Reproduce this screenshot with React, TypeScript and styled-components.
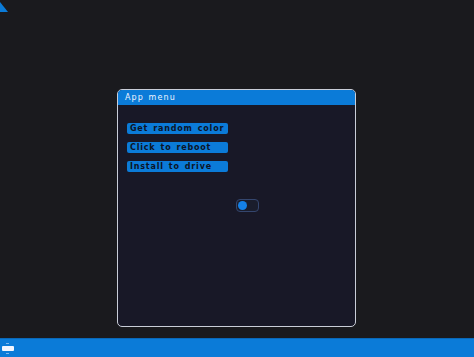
import React, { useState } from 'react';
import styled, { createGlobalStyle } from 'styled-components';

const GlobalStyle = createGlobalStyle`
  html, body {
    margin: 0;
    padding: 0;
    background: #1a1a1e;
    overflow: hidden;
  }
  #root {
    height: 357px;
  }
`;

const Screen = styled.div`
  display: flex;
  flex-direction: column;
  width: 474px;
  height: 357px;
  background: #1a1a1e;
  font-family: 'DejaVu Sans', sans-serif;
`;

const Desktop = styled.div`
  position: relative;
  flex: 1;
  padding-top: 89px;
  padding-left: 117px;
`;

const Cursor = styled.svg`
  position: absolute;
  top: 0;
  left: 0;
`;

const Window = styled.div`
  width: 237px;
  height: 236px;
  display: flex;
  flex-direction: column;
  border: 1px solid #c9cdd8;
  border-radius: 5px;
  background: #181827;
  overflow: hidden;
`;

const TitleBar = styled.div`
  height: 15px;
  display: flex;
  align-items: center;
  padding-left: 7px;
  background: #0b7bd8;
  color: #eef4ff;
  font-size: 8px;
  letter-spacing: 1.1px;
  word-spacing: 1px;
`;

const Body = styled.div`
  display: flex;
  flex-direction: column;
  padding: 18px 0 0 9px;
`;

const ButtonList = styled.div`
  display: flex;
  flex-direction: column;
  gap: 8px;
`;

const MenuButton = styled.button`
  width: 101px;
  height: 11px;
  padding: 0 0 0 3px;
  border: none;
  border-radius: 2px;
  background: #0b7bd8;
  color: #0c1426;
  font-family: 'DejaVu Sans', sans-serif;
  font-size: 8px;
  font-weight: bold;
  letter-spacing: 0.8px;
  word-spacing: 1.5px;
  white-space: nowrap;
  overflow: hidden;
  text-align: left;
  line-height: 11px;
`;

const Toggle = styled.button<{ $on: boolean }>`
  margin: 27px 0 0 109px;
  width: 23px;
  height: 13px;
  padding: 1px;
  border: 1px solid #34466e;
  border-radius: 4px;
  background: #1a1d2c;
  display: flex;
  align-items: center;
  justify-content: ${(p) => (p.$on ? 'flex-end' : 'flex-start')};
`;

const Knob = styled.span`
  width: 9px;
  height: 9px;
  border-radius: 50%;
  background: #1480e6;
`;

const Taskbar = styled.div`
  height: 18px;
  background: #0b7bd8;
  border-top: 1px solid #0a68b8;
  display: flex;
  align-items: center;
  padding-left: 2px;
`;

const StartButton = styled.div`
  position: relative;
  width: 12px;
  height: 5px;
  border-radius: 1px;
  background: #f2f6ff;
  &::before,
  &::after {
    content: '';
    position: absolute;
    left: 4px;
    width: 3px;
    height: 1px;
    background: #7fb6ea;
  }
  &::before {
    top: -3px;
  }
  &::after {
    bottom: -3px;
  }
`;

const items = ['Get random color', 'Click to reboot', 'Install to drive'];

export default function App() {
  const [on, setOn] = useState(false);
  return (
    <>
      <GlobalStyle />
      <Screen>
        <Desktop>
          <Cursor width="9" height="12" viewBox="0 0 9 12">
            <polygon points="0,2 0,12 8,12" fill="#0b7bd8" />
          </Cursor>
          <Window>
            <TitleBar>App menu</TitleBar>
            <Body>
              <ButtonList>
                {items.map((t) => (
                  <MenuButton key={t}>{t}</MenuButton>
                ))}
              </ButtonList>
              <Toggle $on={on} onClick={() => setOn(!on)}>
                <Knob />
              </Toggle>
            </Body>
          </Window>
        </Desktop>
        <Taskbar>
          <StartButton />
        </Taskbar>
      </Screen>
    </>
  );
}
